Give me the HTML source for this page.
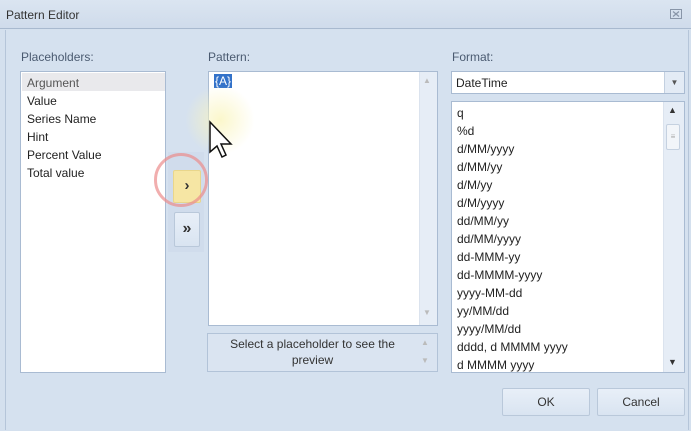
<!DOCTYPE html>
<html><head><style>
*{margin:0;padding:0;box-sizing:border-box}
body{width:691px;height:431px;overflow:hidden;background:#d4e0ee;font-family:"Liberation Sans",sans-serif;font-size:12px;color:#222;position:relative}
.a{position:absolute}
.box{position:absolute;background:#fff;border:1px solid #a9bbd2}
.it{position:absolute;left:6px;white-space:nowrap}
.lbl{position:absolute;color:#4a5a70;font-size:12px}
.sb{position:absolute;background:#e6edf6;border-left:1px solid #dbe3ee}
.btn{position:absolute;border:1px solid #b9c8da;background:linear-gradient(#e8eff8,#d9e4f1);border-radius:2px;text-align:center;color:#333}
</style></head><body>
<div class="a" style="left:0;top:0;width:691px;height:29px;background:linear-gradient(#dbe5f1,#cfdbeb);border-bottom:1px solid #a8b9cf"></div>
<div class="a" style="left:6px;top:8px;font-size:12px;color:#333">Pattern Editor</div>
<svg class="a" style="left:670px;top:9px" width="12" height="10" viewBox="0 0 12 10"><rect x="0.5" y="0.5" width="11" height="9" fill="none" stroke="#8895a8"/><path d="M3 2.5 L9 7.5 M9 2.5 L3 7.5" stroke="#8895a8" stroke-width="1.2"/></svg>
<div class="a" style="left:5px;top:30px;width:684px;height:400px;border-left:1px solid #b5c5d9;border-right:1px solid #b5c5d9;background:#d5e1ef"></div>

<div class="lbl" style="left:21px;top:50px">Placeholders:</div>
<div class="lbl" style="left:208px;top:50px">Pattern:</div>
<div class="lbl" style="left:452px;top:50px">Format:</div>

<div class="box" style="left:20px;top:71px;width:146px;height:302px">
<div class="a" style="left:1px;top:1px;width:143px;height:18px;background:#e9e9ec"></div>
<div class="it" style="top:4px;color:#555">Argument</div>
<div class="it" style="top:22px">Value</div>
<div class="it" style="top:40px">Series Name</div>
<div class="it" style="top:58px">Hint</div>
<div class="it" style="top:76px">Percent Value</div>
<div class="it" style="top:94px">Total value</div>
</div>

<div class="a" style="left:168px;top:152px;width:36px;height:100px;background:#d0dcec"></div>
<div class="btn" style="left:173px;top:170px;width:28px;height:33px;background:#f6e6a4;border-color:#e9d68b;font-size:15px;line-height:30px;font-weight:bold">›</div>
<div class="btn" style="left:174px;top:212px;width:26px;height:35px;font-size:16px;line-height:32px;font-weight:bold">»</div>
<div class="a" style="left:154px;top:153px;width:54px;height:54px;border:3px solid rgba(235,140,140,.7);border-radius:50%"></div>

<div class="box" style="left:208px;top:71px;width:230px;height:255px">
<div class="a" style="left:5px;top:2px;background:#3372c9;color:#fff;padding:0 1px">{A}</div>
<div class="sb" style="left:210px;top:0;width:18px;height:253px"></div>
<div class="a" style="left:214px;top:4px;font-size:8px;color:#bbb">▲</div>
<div class="a" style="left:214px;top:236px;font-size:8px;color:#bbb">▼</div>
</div>
<div class="a" style="left:185px;top:85px;width:70px;height:70px;border-radius:50%;background:radial-gradient(rgba(250,245,190,.8),rgba(250,245,190,0) 70%)"></div>
<svg class="a" style="left:208px;top:120px" width="28" height="40" viewBox="0 0 28 40"><path d="M2 2 L2 32 L9 26 L14 37 L18 35 L13 24 L23 24 Z" fill="#fff" stroke="#111" stroke-width="1.5"/></svg>

<div class="a" style="left:207px;top:333px;width:231px;height:39px;background:#dae4f1;border:1px solid #b2c3d8"></div>
<div class="a" style="left:210px;top:336px;width:205px;text-align:center;line-height:16px;color:#333">Select a placeholder to see the preview</div>
<div class="a" style="left:421px;top:338px;font-size:8px;color:#bbb">▲</div>
<div class="a" style="left:421px;top:356px;font-size:8px;color:#bbb">▼</div>

<div class="box" style="left:451px;top:71px;width:234px;height:23px">
<div class="it" style="top:4px;left:4px">DateTime</div>
<div class="a" style="left:212px;top:0;width:20px;height:21px;background:#e3ebf5;border-left:1px solid #c3d0e0;font-size:8px;text-align:center;line-height:21px;color:#555">▼</div>
</div>

<div class="box" style="left:451px;top:101px;width:234px;height:272px;overflow:hidden">
<div class="it" style="top:4px;left:5px">q</div>
<div class="it" style="top:22px;left:5px">%d</div>
<div class="it" style="top:40px;left:5px">d/MM/yyyy</div>
<div class="it" style="top:58px;left:5px">d/MM/yy</div>
<div class="it" style="top:76px;left:5px">d/M/yy</div>
<div class="it" style="top:94px;left:5px">d/M/yyyy</div>
<div class="it" style="top:112px;left:5px">dd/MM/yy</div>
<div class="it" style="top:130px;left:5px">dd/MM/yyyy</div>
<div class="it" style="top:148px;left:5px">dd-MMM-yy</div>
<div class="it" style="top:166px;left:5px">dd-MMMM-yyyy</div>
<div class="it" style="top:184px;left:5px">yyyy-MM-dd</div>
<div class="it" style="top:202px;left:5px">yy/MM/dd</div>
<div class="it" style="top:220px;left:5px">yyyy/MM/dd</div>
<div class="it" style="top:238px;left:5px">dddd, d MMMM yyyy</div>
<div class="it" style="top:256px;left:5px">d MMMM yyyy</div>
<div class="sb" style="left:211px;top:0;width:21px;height:270px"></div>
<div class="a" style="left:216px;top:3px;font-size:9px;color:#333">▲</div>
<div class="a" style="left:214px;top:22px;width:14px;height:26px;background:#f2f5f9;border:1px solid #c5d1e0;border-radius:2px;font-size:8px;text-align:center;line-height:24px;color:#aaa">≡</div>
<div class="a" style="left:216px;top:255px;font-size:9px;color:#333">▼</div>
</div>

<div class="btn" style="left:502px;top:388px;width:88px;height:28px;line-height:26px">OK</div>
<div class="btn" style="left:597px;top:388px;width:88px;height:28px;line-height:26px">Cancel</div>
</body></html>
